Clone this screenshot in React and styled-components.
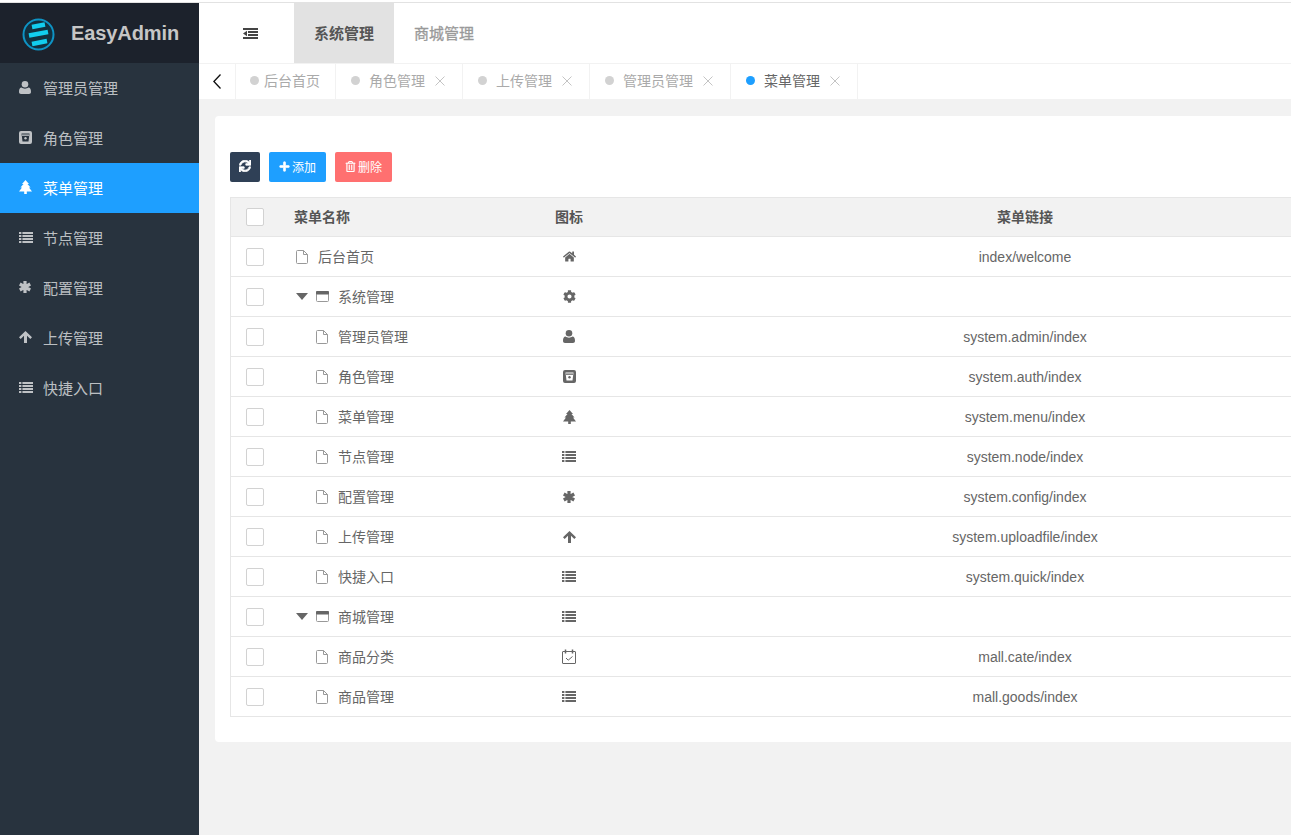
import React from "react";
import styled, { createGlobalStyle } from "styled-components";
import { FaHome, FaCog, FaSync, FaPlus, FaRegTrashAlt } from "react-icons/fa";

const Global = createGlobalStyle`
  html, body { margin: 0; padding: 0; height: 100%; overflow: hidden; background: #fff; }
  body { font-family: "Liberation Sans", "Noto Sans CJK SC", sans-serif; font-size: 14px; color: #666; }
  * { box-sizing: border-box; }
`;

const Page = styled.div`
  height: 835px;
  width: 1291px;
  padding-top: 2px;
  overflow: hidden;
`;
const TopLine = styled.div`
  height: 1px;
  background: #e2e2e2;
`;
const Shell = styled.div`
  display: flex;
  height: 832px;
`;
const Sidebar = styled.aside`
  width: 199px;
  flex: none;
  background: #28333e;
`;
const Brand = styled.div`
  height: 60px;
  background: #1c222c;
  display: flex;
  align-items: center;
  padding-left: 22px;
  gap: 16px;
`;
const BrandLogo = styled.span`
  display: flex;
  padding-top: 3px;
`;
const BrandName = styled.span`
  font-size: 20px;
  font-weight: 700;
  letter-spacing: -0.1px;
  color: #c6c6c6;
`;
const MenuItem = styled.div`
  height: 50px;
  display: flex;
  align-items: center;
  padding: 0 0 2px 19px;
  font-size: 15px;
  color: ${(p) => (p.$active ? "#fff" : "rgba(255,255,255,.7)")};
  background: ${(p) => (p.$active ? "#1e9fff" : "transparent")};
`;
const MenuIcon = styled.span`
  width: 24px;
  flex: none;
  display: flex;
  align-items: center;
  font-size: 14px;
`;
const Main = styled.main`
  flex: 1;
  min-width: 0;
  display: flex;
  flex-direction: column;
  overflow: hidden;
  background: #f2f2f2;
`;
const Header = styled.header`
  height: 61px;
  flex: none;
  background: #fff;
  border-bottom: 1px solid #f2f2f2;
  display: flex;
`;
const Fold = styled.div`
  width: 95px;
  height: 60px;
  display: flex;
  align-items: center;
  padding-left: 44px;
  color: #444;
`;
const TopNav = styled.div`
  width: 100px;
  height: 60px;
  padding-bottom: 2px;
  display: flex;
  align-items: center;
  justify-content: center;
  font-size: 15px;
  font-weight: ${(p) => (p.$active ? 700 : 400)};
  -webkit-text-stroke: ${(p) => (p.$active ? "0" : "0.3px")};
  color: ${(p) => (p.$active ? "#555" : "#999")};
  background: ${(p) => (p.$active ? "#e2e2e2" : "transparent")};
`;
const TabBar = styled.div`
  height: 35px;
  flex: none;
  background: #fff;
  display: flex;
`;
const TabBack = styled.div`
  width: 37px;
  display: flex;
  align-items: center;
  justify-content: center;
  border-right: 1px solid #f2f2f2;
  color: #111;
`;
const Tab = styled.div`
  display: flex;
  align-items: center;
  padding: 0 ${(p) => (p.$tight ? 15 : 17)}px 3px ${(p) => (p.$tight ? 14 : 15)}px;
  border-right: 1px solid #f2f2f2;
  color: ${(p) => (p.$active ? "#666" : "#aaa")};
`;
const Dot = styled.i`
  width: 9px;
  height: 9px;
  border-radius: 50%;
  flex: none;
  margin-right: ${(p) => (p.$tight ? "5px" : "9px")};
  background: ${(p) => (p.$active ? "#1e9fff" : "#d2d2d2")};
`;
const TabClose = styled.span`
  display: flex;
  margin-left: 10px;
  color: #c4c4c4;
  padding-top: 2px;
`;
const Body = styled.div`
  flex: 1;
  padding: 17px 0 0 16px;
  overflow: hidden;
`;
const Card = styled.section`
  width: 1231px;
  background: #fff;
  border-radius: 4px;
  padding: 36px 15px 25px;
`;
const Toolbar = styled.div`
  display: flex;
  gap: 9px;
  margin-bottom: 15px;
`;
const ToolButton = styled.button`
  height: 30px;
  width: ${(p) => p.$w}px;
  border: 0;
  padding: 0 0 2px;
  border-radius: 2px;
  color: #fff;
  background: ${(p) => p.$bg};
  font: 12px "Liberation Sans", "Noto Sans CJK SC", sans-serif;
  display: flex;
  align-items: center;
  justify-content: center;
  gap: 2px;
  svg { font-size: ${(p) => p.$icon || 11}px; stroke: currentColor; stroke-width: ${(p) => p.$stroke ?? 30}px; }
`;
const Table = styled.table`
  width: 1201px;
  table-layout: fixed;
  border-collapse: separate;
  border-spacing: 0;
  border-top: 1px solid #e6e6e6;
  border-left: 1px solid #e6e6e6;
`;
const Th = styled.th`
  height: 39px;
  padding: 0 15px 2px;
  background: #f2f2f2;
  border-bottom: 1px solid #e6e6e6;
  font-weight: 700;
  font-size: 14px;
  color: #555;
  text-align: ${(p) => p.$align || "center"};
`;
const HeadCheckCell = styled(Th)`
  padding-bottom: 0;
`;
const Td = styled.td`
  height: 40px;
  padding: 0 15px;
  border-bottom: 1px solid #e6e6e6;
  color: #666;
  text-align: ${(p) => p.$align || "center"};
`;
const Check = styled.span`
  display: block;
  width: 18px;
  height: 18px;
  margin: 0 auto;
  border: 1px solid #d2d2d2;
  border-radius: 2px;
  background: #fff;
`;
const TreeCell = styled.div`
  display: flex;
  align-items: center;
  gap: 9px;
  padding-left: ${(p) => 2 + p.$level * 20}px;
`;
const TreeLabel = styled.span`
  padding: 0 0 2px 1px;
`;
const TreeIconSlot = styled.span`
  display: flex;
  width: 12px;
  flex: none;
`;
const Caret = styled.span`
  width: 12px;
  margin-left: -20px;
  margin-right: -1px;
  display: flex;
  align-items: center;
`;
const Glyph = styled.span`
  display: flex;
  justify-content: center;
  color: #666;
  font-size: 14px;
`;

const FileIcon = () => (
  <svg width="12" height="14" viewBox="0 0 12 14" fill="none" stroke="#999" strokeWidth="1">
    <path d="M1.5.5h6l4 4v8a1 1 0 0 1-1 1h-9a1 1 0 0 1-1-1v-11a1 1 0 0 1 1-1z" />
    <path d="M7.500.500v4h4" />
  </svg>
);
const WindowIcon = () => (
  <svg width="13" height="12" viewBox="0 0 13 12" style={{ flex: "none" }}>
    <rect x=".5" y=".5" width="12" height="10" rx="1" fill="#fff" stroke="#999" />
    <rect x="0" y="0" width="13" height="3.500" rx="1" fill="#666" />
  </svg>
);
const CaretIcon = () => (
  <svg width="12" height="7" viewBox="0 0 12 7"><path d="M0 0h12L6 7z" fill="#666" /></svg>
);
const BucketIcon = () => (
  <svg width="13" height="13" viewBox="0 0 13 13" fill="currentColor">
    <path
      fillRule="evenodd"
      d="M2 0h9a2 2 0 0 1 2 2v9a2 2 0 0 1-2 2H2a2 2 0 0 1-2-2V2a2 2 0 0 1 2-2zM2.500 2.500l1 8h6l1-8z"
    />
    <rect x="3" y="3.500" width="7" height="1.300" />
    <circle cx="6.500" cy="7.300" r="1.200" />
  </svg>
);
const UserIcon = () => (
  <svg width="12" height="13" viewBox="0 0 12 13" fill="currentColor">
    <circle cx="6" cy="3.300" r="3.300" />
    <path d="M0 11c0-2.800.8-4.500 2.600-4.500C3.500 7.200 4.600 7.700 6 7.700s2.500-.5 3.400-1.200C11.200 6.500 12 8.200 12 11c0 1.200-.8 2-2 2H2c-1.200 0-2-.8-2-2z" />
  </svg>
);
const TreeIcon = () => (
  <svg width="13" height="14" viewBox="0 0 13 14" fill="currentColor">
    <path d="M6.500 0L10 4H8.500L11.500 7.500H10L13 11.500H7.800V14H5.200V11.500H0L3 7.500H1.500L4.500 4H3z" />
  </svg>
);
const ListIcon = () => (
  <svg width="14" height="11" viewBox="0 0 14 11" fill="currentColor">
    {[0, 3, 6, 9].map((y) => (
      <path key={y} d={`M0 ${y}h2.400v2H0zM3.400 ${y}H14v2H3.400z`} />
    ))}
  </svg>
);
const AsteriskIcon = () => (
  <svg width="12" height="12" viewBox="0 0 12 12" fill="none" stroke="currentColor" strokeWidth="3.200">
    <path d="M6 0v12M.8 3l10.400 6M.8 9l10.400-6" />
  </svg>
);
const UpIcon = () => (
  <svg width="13" height="12" viewBox="0 0 13 12" fill="currentColor">
    <path d="M6.500 0L13 6.300 11.300 8 8 4.800V12H5V4.800L1.700 8 0 6.300z" />
  </svg>
);
const CalendarIcon = () => (
  <svg width="14" height="15" viewBox="0 0 14 15" fill="none" stroke="currentColor" strokeWidth="1">
    <path d="M1 2.500h12a.5.5 0 0 1 .5.5v11a.5.5 0 0 1-.5.5H1a.5.5 0 0 1-.5-.5V3a.5.5 0 0 1 .5-.5z" />
    <path d="M3.500 .5v4M10.500 .5v4" strokeWidth="1.500" />
    <path d="M4 9l2.200 2.200L10.500 7.500" />
  </svg>
);
const OutdentIcon = () => (
  <svg width="15" height="11" viewBox="0 0 15 11" fill="currentColor">
    <path d="M0 0h15v2H0zM5 3h10v2H5zM5 6h10v2H5zM0 9h15v2H0zM4 2.700L0 5.500l4 2.800z" />
  </svg>
);
const BackIcon = () => (
  <svg width="8" height="15" viewBox="0 0 8 15" fill="none" stroke="currentColor" strokeWidth="1.300">
    <path d="M7.500.5L.9 7.500l6.600 7" />
  </svg>
);
const CloseIcon = () => (
  <svg width="10" height="10" viewBox="0 0 10 10" fill="none" stroke="currentColor" strokeWidth="1">
    <path d="M.5.5l9 9M9.500.5l-9 9" />
  </svg>
);
const Logo = () => (
  <svg width="33" height="33" viewBox="0 0 33 33">
    <circle cx="16.500" cy="16.500" r="15" fill="#12303f" stroke="#0e93c4" strokeWidth="2" />
    <g stroke="#12cdee" strokeWidth="4.500" fill="none">
      <path d="M10 9 L23 6.500" />
      <path d="M7 17.500 L26 14" />
      <path d="M10 26 L25 23" />
    </g>
  </svg>
);

const menu = [
  [<UserIcon key="i" />, "管理员管理"],
  [<BucketIcon key="i" />, "角色管理"],
  [<TreeIcon key="i" />, "菜单管理", true],
  [<ListIcon key="i" />, "节点管理"],
  [<AsteriskIcon key="i" />, "配置管理"],
  [<UpIcon key="i" />, "上传管理"],
  [<ListIcon key="i" />, "快捷入口"],
];

const tabs = [
  { name: "后台首页", tight: true },
  { name: "角色管理", close: true },
  { name: "上传管理", close: true },
  { name: "管理员管理", close: true },
  { name: "菜单管理", close: true, active: true },
];

const rows = [
  { name: "后台首页", level: 0, icon: <FaHome size={13} />, url: "index/welcome" },
  { name: "系统管理", level: 1, parent: true, icon: <FaCog size={13} />, url: "" },
  { name: "管理员管理", level: 1, icon: <UserIcon />, url: "system.admin/index" },
  { name: "角色管理", level: 1, icon: <BucketIcon />, url: "system.auth/index" },
  { name: "菜单管理", level: 1, icon: <TreeIcon />, url: "system.menu/index" },
  { name: "节点管理", level: 1, icon: <ListIcon />, url: "system.node/index" },
  { name: "配置管理", level: 1, icon: <AsteriskIcon />, url: "system.config/index" },
  { name: "上传管理", level: 1, icon: <UpIcon />, url: "system.uploadfile/index" },
  { name: "快捷入口", level: 1, icon: <ListIcon />, url: "system.quick/index" },
  { name: "商城管理", level: 1, parent: true, icon: <ListIcon />, url: "" },
  { name: "商品分类", level: 1, icon: <CalendarIcon />, url: "mall.cate/index" },
  { name: "商品管理", level: 1, icon: <ListIcon />, url: "mall.goods/index" },
];

export default function App() {
  return (
    <Page>
      <Global />
      <TopLine />
      <Shell>
        <Sidebar>
          <Brand>
            <BrandLogo><Logo /></BrandLogo>
            <BrandName>EasyAdmin</BrandName>
          </Brand>
          {menu.map(([icon, label, active]) => (
            <MenuItem key={label} $active={active}>
              <MenuIcon>{icon}</MenuIcon>
              {label}
            </MenuItem>
          ))}
        </Sidebar>
        <Main>
          <Header>
            <Fold><OutdentIcon /></Fold>
            <TopNav $active>系统管理</TopNav>
            <TopNav>商城管理</TopNav>
          </Header>
          <TabBar>
            <TabBack><BackIcon /></TabBack>
            {tabs.map((t) => (
              <Tab key={t.name} $active={t.active} $tight={t.tight}>
                <Dot $active={t.active} $tight={t.tight} />
                {t.name}
                {t.close && <TabClose><CloseIcon /></TabClose>}
              </Tab>
            ))}
          </TabBar>
          <Body>
            <Card>
              <Toolbar>
                <ToolButton $w={30} $bg="#2f4056" $icon={12}><FaSync /></ToolButton>
                <ToolButton $w={57} $bg="#1e9fff"><FaPlus />添加</ToolButton>
                <ToolButton $w={57} $bg="#ff7070" $stroke={8}><FaRegTrashAlt />删除</ToolButton>
              </Toolbar>
              <Table>
                <colgroup>
                  <col width="48" />
                  <col width="240" />
                  <col width="100" />
                  <col width="812" />
                </colgroup>
                <thead>
                  <tr>
                    <HeadCheckCell><Check /></HeadCheckCell>
                    <Th $align="left">菜单名称</Th>
                    <Th>图标</Th>
                    <Th>菜单链接</Th>
                  </tr>
                </thead>
                <tbody>
                  {rows.map((r) => (
                    <tr key={r.name}>
                      <Td><Check /></Td>
                      <Td $align="left">
                        <TreeCell $level={r.level}>
                          {r.parent && <Caret><CaretIcon /></Caret>}
                          <TreeIconSlot>{r.parent ? <WindowIcon /> : <FileIcon />}</TreeIconSlot>
                          <TreeLabel>{r.name}</TreeLabel>
                        </TreeCell>
                      </Td>
                      <Td><Glyph>{r.icon}</Glyph></Td>
                      <Td>{r.url}</Td>
                    </tr>
                  ))}
                </tbody>
              </Table>
            </Card>
          </Body>
        </Main>
      </Shell>
    </Page>
  );
}
